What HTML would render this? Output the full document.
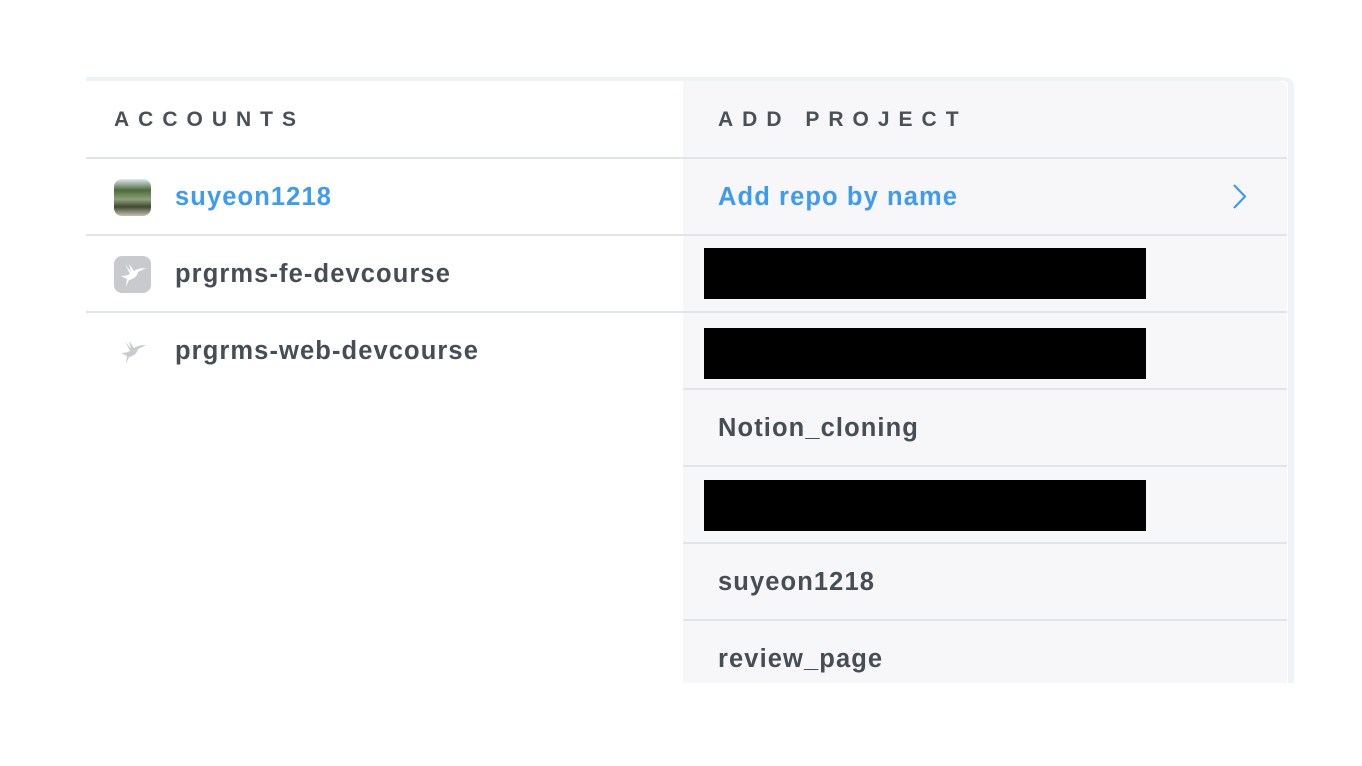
<!DOCTYPE html>
<html><head><meta charset="utf-8"><style>
*{margin:0;padding:0;box-sizing:border-box}
body{width:1362px;height:766px;background:#fff;position:relative;overflow:hidden;font-family:"Liberation Sans",sans-serif;font-weight:bold;color:#474d55}
.a{position:absolute}
.frame{left:86px;top:77px;width:1208px;height:606px;border-top:4px solid #eef3f8;border-right:6px solid #eef3f8;border-radius:0 10px 0 0}
.right{left:683px;top:81px;width:604px;height:602px;background:#f7f7f9;border-radius:0 8px 0 0}
.hl{height:2px;background:#e1e4e8}
.hd{font-size:21px;letter-spacing:9px;color:#4a5057}
.t{font-size:25.5px;letter-spacing:1.1px}
.blue{color:#3d9bf2}
.blk{background:#000;left:704px;width:442px;height:51px}
</style></head><body>
<div class="a frame"></div>
<div class="a right"></div>
<div class="a hd" style="left:114px;top:108px">ACCOUNTS</div>
<div class="a hd" style="left:718px;top:108px">ADD PROJECT</div>
<div class="a hl" style="left:86px;top:157px;width:1201px"></div>
<div class="a hl" style="left:86px;top:234px;width:1201px"></div>
<div class="a hl" style="left:86px;top:311px;width:1201px"></div>
<div class="a hl" style="left:683px;top:388px;width:604px"></div>
<div class="a hl" style="left:683px;top:465px;width:604px"></div>
<div class="a hl" style="left:683px;top:542px;width:604px"></div>
<div class="a hl" style="left:683px;top:619px;width:604px"></div>
<div class="a" style="left:114px;top:179px;width:37px;height:37px;border-radius:8px;background:linear-gradient(#dfe8ee 0%,#4d6a3c 30%,#8fa07a 55%,#3d4a30 75%,#c8c0b0 100%)"></div>
<div class="a" style="left:114px;top:256px;width:37px;height:37px;border-radius:8px;background:#c9cacd"></div>
<svg class="a" style="left:118px;top:260px" width="30" height="30" viewBox="0 0 30 30"><path d="M7 4 L13 12 L11 4 L16 11 C19 9 23 8 28 8 L20 12 C19 17 15 19 11 20 L8 27 L9 19 L3 16 C8 16 10 15 12 14Z" fill="#fff"/></svg>
<svg class="a" style="left:118px;top:337px" width="30" height="30" viewBox="0 0 30 30"><path d="M7 4 L13 12 L11 4 L16 11 C19 9 23 8 28 8 L20 12 C19 17 15 19 11 20 L8 27 L9 19 L3 16 C8 16 10 15 12 14Z" fill="#c9cacd"/></svg>
<div class="a t blue" style="left:175px;top:183px">suyeon1218</div>
<div class="a t" style="left:175px;top:260px">prgrms-fe-devcourse</div>
<div class="a t" style="left:175px;top:337px">prgrms-web-devcourse</div>
<div class="a t blue" style="left:718px;top:183px">Add repo by name</div>
<svg class="a" style="left:1230px;top:183px" width="20" height="28" viewBox="0 0 20 28"><path d="M4 2 L15 13.5 L4 25" fill="none" stroke="#3d9bf2" stroke-width="2.2"/></svg>
<div class="a blk" style="top:248px"></div>
<div class="a blk" style="top:328px"></div>
<div class="a t" style="left:718px;top:414px">Notion_cloning</div>
<div class="a blk" style="top:480px"></div>
<div class="a t" style="left:718px;top:568px">suyeon1218</div>
<div class="a t" style="left:718px;top:645px">review_page</div>
</body></html>
